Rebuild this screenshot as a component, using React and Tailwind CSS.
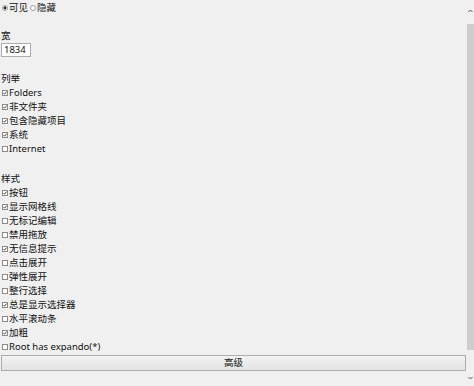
import React from "react";

function Check({ checked }) {
  return (
    <svg width="6" height="6" viewBox="0 0 6 6" className="shrink-0">
      <rect x="0.5" y="0.5" width="5" height="5" fill="#fff" stroke="#8a8a8a" strokeWidth="1" />
      {checked && <path d="M1.5 3 L2.6 4.2 L4.6 1.6" fill="none" stroke="#333" strokeWidth="0.9" />}
    </svg>
  );
}

function Radio({ checked }) {
  return (
    <svg width="6" height="6" viewBox="0 0 6 6" className="shrink-0">
      <circle cx="3" cy="3" r="2.5" fill="#fff" stroke="#8a8a8a" strokeWidth="0.8" />
      {checked && <circle cx="3" cy="3" r="1.4" fill="#222" />}
    </svg>
  );
}

function Item({ checked, label }) {
  return (
    <div className="flex items-center h-[14px] pl-[2px] gap-[1px]">
      <Check checked={checked} />
      <span>{label}</span>
    </div>
  );
}

const list1 = [
  [true, "Folders"],
  [true, "非文件夹"],
  [true, "包含隐藏项目"],
  [true, "系统"],
  [false, "Internet"],
];

const list2 = [
  [true, "按钮"],
  [true, "显示网格线"],
  [false, "无标记编辑"],
  [false, "禁用拖放"],
  [true, "无信息提示"],
  [false, "点击展开"],
  [false, "弹性展开"],
  [false, "整行选择"],
  [true, "总是显示选择器"],
  [false, "水平滚动条"],
  [true, "加粗"],
  [false, "Root has expando(*)"],
];

export default function App() {
  return (
    <div
      className="w-[474px] h-[386px] bg-[#f0f0f0] flex overflow-hidden text-[#111] text-[9.5px] leading-[14px]"
      style={{ fontFamily: '"Noto Sans", "Noto Sans CJK SC", sans-serif' }}
    >
      <div className="flex-1 flex flex-col pt-[1px]">
        <div className="flex items-center h-[14px] pl-[2px]">
          <Radio checked />
          <span className="ml-[1px]">可见</span>
          <span className="ml-[2px]"><Radio /></span>
          <span className="ml-[1px]">隐藏</span>
        </div>
        <div className="h-[14px]" />
        <div className="h-[14px] pl-[1px]">宽</div>
        <div className="ml-[1px] w-[30px] h-[14px] bg-white border border-[#adadad] flex items-center pl-[2px] leading-none">1834</div>
        <div className="h-[15px]" />
        <div className="h-[14px] pl-[1px]">列举</div>
        {list1.map(([c, l]) => (
          <Item key={l} checked={c} label={l} />
        ))}
        <div className="h-[16px]" />
        <div className="h-[14px] pl-[1px]">样式</div>
        {list2.map(([c, l]) => (
          <Item key={l} checked={c} label={l} />
        ))}
        <div className="mt-[1px] ml-[1px] mr-[1px] h-[16px] border border-[#acacac] bg-gradient-to-b from-[#f2f2f2] to-[#e3e3e3] flex items-center justify-center leading-none">
          高级
        </div>
      </div>
      <div className="w-[7px] flex flex-col items-center">
        <div className="h-[20px] flex items-center justify-center pt-[2px]">
          <svg width="5" height="4" viewBox="0 0 5 4"><path d="M0.5 3 L2.5 1 L4.5 3" fill="none" stroke="#555" strokeWidth="1" /></svg>
        </div>
        <div className="mt-[4px] w-[7px] h-[326px] bg-[#cdcdcd]" />
        <div className="flex-1" />
        <div className="h-[16px] flex items-center justify-center">
          <svg width="5" height="4" viewBox="0 0 5 4"><path d="M0.5 1 L2.5 3 L4.5 1" fill="none" stroke="#555" strokeWidth="1" /></svg>
        </div>
      </div>
    </div>
  );
}
